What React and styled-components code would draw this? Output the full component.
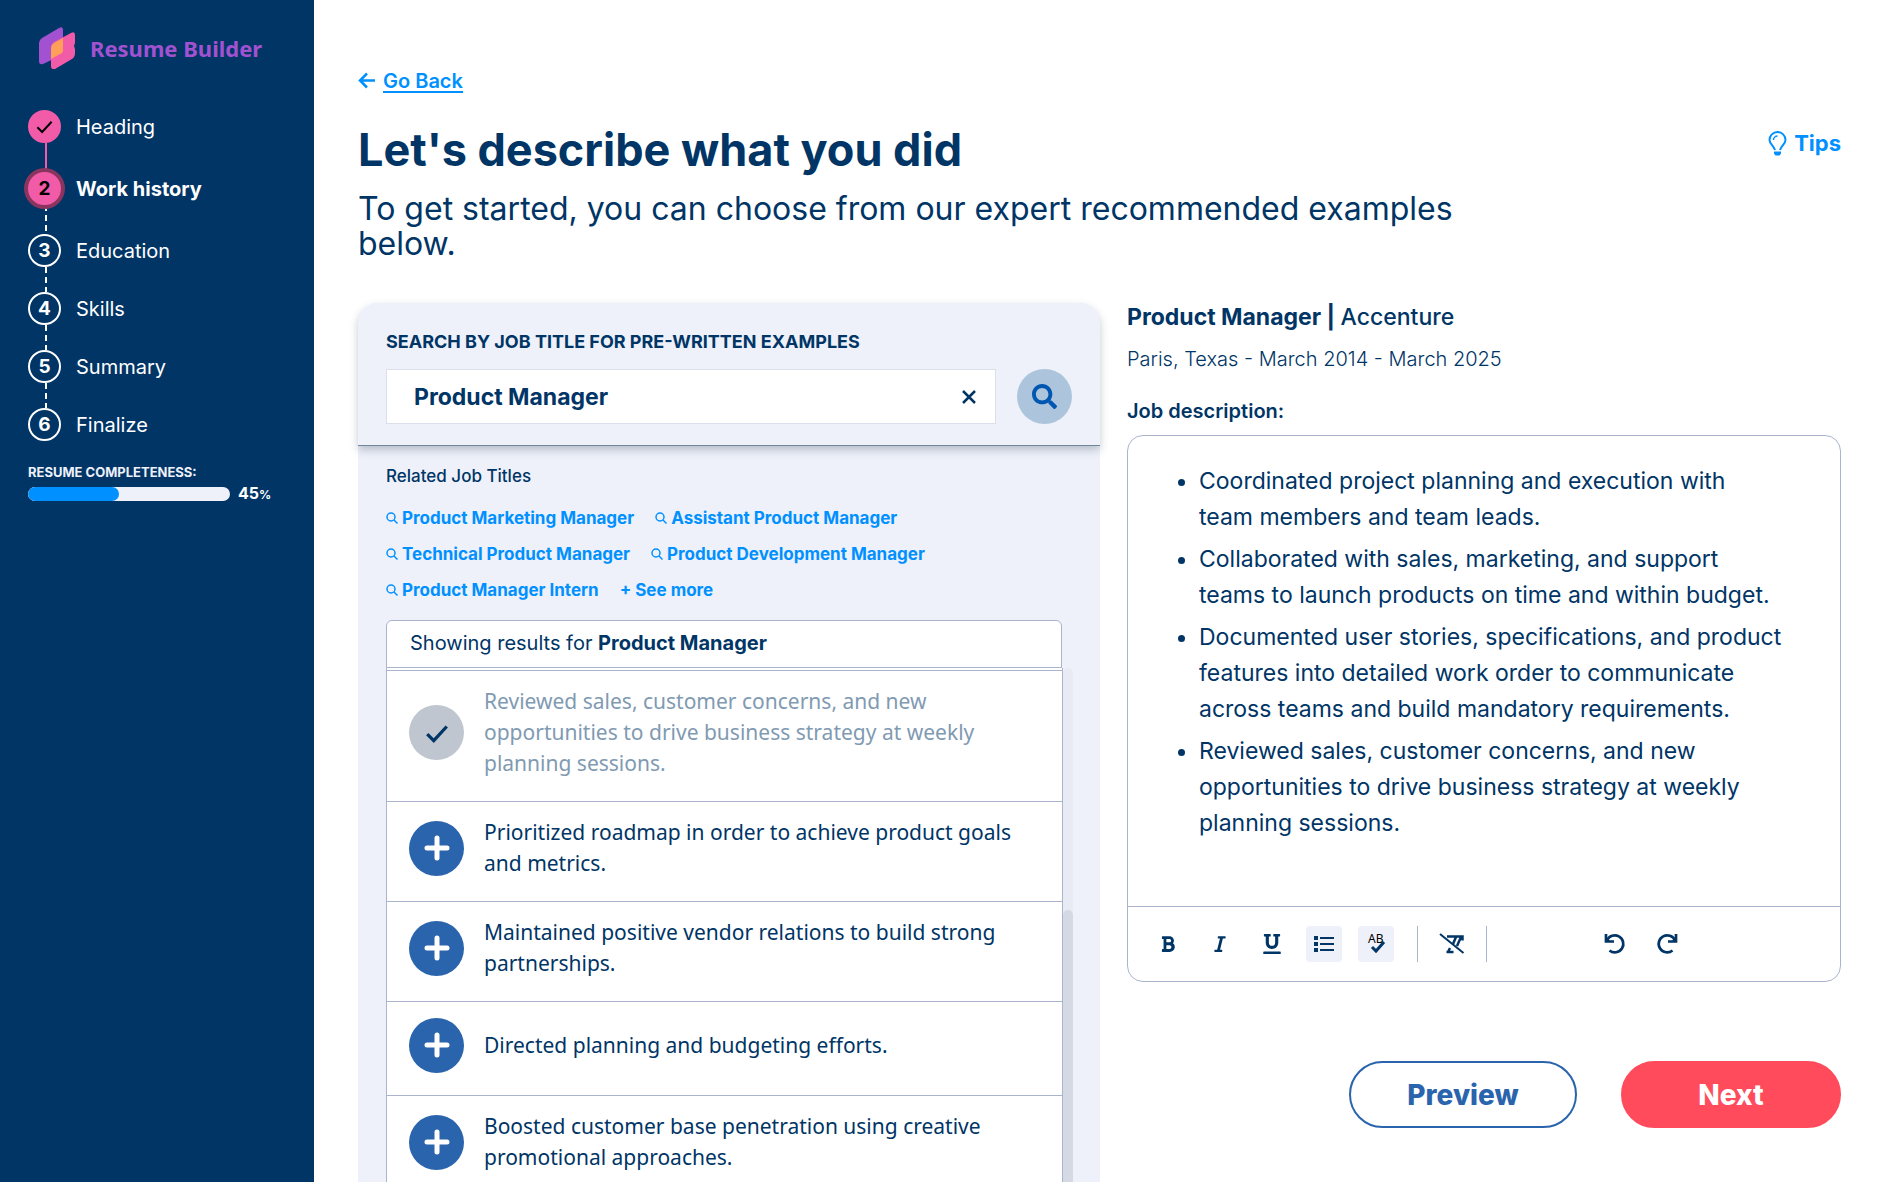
import React, { useState } from 'react'
import styled, { createGlobalStyle, css } from 'styled-components'
import { FaBold, FaItalic, FaUnderline, FaSearch } from 'react-icons/fa'

const navy = '#003566'
const blue = '#0090ff'
const line = '#aab4cf'
const pale = '#eef1fa'

const GlobalStyle = createGlobalStyle`
  * {
    box-sizing: border-box;
  }
  body {
    margin: 0;
    background: white;
    color: ${navy};
    font-family: 'Inter', 'Liberation Sans', sans-serif;
  }
  h1, h2, h3, p, ul, ol {
    margin: 0;
    padding: 0;
  }
  button, input {
    font-family: inherit;
    color: inherit;
  }
  button {
    border: 0;
    padding: 0;
    background: none;
    cursor: pointer;
  }
`

const Page = styled.div`
  display: flex;
  height: 100vh;
  overflow: hidden;
`

/* ---------- sidebar ---------- */

const Sidebar = styled.aside`
  flex: 0 0 314px;
  padding: 27px 28px;
  background: ${navy};
  color: white;
`

const Brand = styled.a`
  display: flex;
  align-items: center;
  gap: 14px;
  height: 42px;
  padding-left: 11px;
  color: #a252d0;
  font-family: 'Noto Sans', sans-serif;
  font-size: 22px;
  line-height: 40px;
  font-weight: 700;
  text-decoration: none;
  white-space: nowrap;
`

const Steps = styled.ol`
  margin-top: 41px;
  list-style: none;
`

const Step = styled.li`
  display: flex;
  align-items: center;
  gap: 15px;
  height: 33px;
  font-size: 20px;
  font-weight: ${(props) => (props.$current ? 700 : 400)};
`

const Marker = styled.span`
  display: flex;
  flex: 0 0 33px;
  align-items: center;
  justify-content: center;
  height: 33px;
  border: 2px solid white;
  border-radius: 50%;
  font-size: 19px;
  font-weight: 700;

  ${(props) =>
    props.$filled &&
    css`
      border-color: #f25ba7;
      background: #f25ba7;
      color: black;
    `}

  ${(props) =>
    props.$current &&
    css`
      box-shadow: 0 0 0 4px #8a355f;
    `}
`

const Connector = styled.li`
  width: 2px;
  height: ${(props) => (props.$tall ? 29 : 25)}px;
  margin-left: 17px;
  background: ${(props) =>
    props.$done ? '#f25ba7' : 'repeating-linear-gradient(to bottom, white 0 6px, transparent 6px 10px)'};
`

const Completeness = styled.div`
  margin-top: 23px;
  font-weight: 700;
`

const CompletenessLabel = styled.p`
  font-size: 13px;
  line-height: 16px;
  color: ${pale};
`

const CompletenessRow = styled.div`
  display: flex;
  align-items: center;
  gap: 8px;
  margin-top: 3px;
  font-size: 16px;
  line-height: 20px;

  small {
    font-size: 12px;
  }
`

const Bar = styled.div`
  flex: 0 0 202px;
  height: 14px;
  overflow: hidden;
  border-radius: 7px;
  background: ${pale};
`

const BarFill = styled.div`
  height: 100%;
  border-radius: 7px;
  background: ${blue};
`

/* ---------- main ---------- */

const Main = styled.main`
  display: flex;
  flex: 1;
  flex-direction: column;
  min-width: 0;
  padding: 68px 39px 0 44px;
`

const BackLink = styled.a`
  display: flex;
  align-items: center;
  gap: 8px;
  height: 24px;
  color: ${blue};
  font-size: 20px;
  font-weight: 600;
  text-decoration: none;

  span {
    padding-top: 3px;
    border-bottom: 2px solid ${blue};
    line-height: 20px;
  }
`

const TitleRow = styled.div`
  display: flex;
  align-items: center;
  justify-content: space-between;
  margin-top: 28px;
`

const Title = styled.h1`
  font-size: 45px;
  line-height: 60px;
  font-weight: 700;
`

const Tips = styled.a`
  display: flex;
  align-items: center;
  gap: 4px;
  padding-bottom: 14px;
  color: ${blue};
  font-size: 22px;
  font-weight: 700;
  text-decoration: none;
`

const Subtitle = styled.p`
  max-width: 1130px;
  margin-top: 11px;
  font-size: 32px;
  line-height: 35px;
  font-weight: 400;
`

const Columns = styled.div`
  display: grid;
  flex: 1;
  grid-template-columns: 742fr 714fr;
  column-gap: 27px;
  min-height: 0;
  margin-top: 42px;
`

/* ---------- examples ---------- */

const Examples = styled.section`
  display: flex;
  flex-direction: column;
  min-width: 0;
  min-height: 0;
  border-radius: 20px 20px 0 0;
  background: ${pale};
`

const SearchBox = styled.form`
  padding: 27px 28px 21px;
  border-bottom: 1px solid #70879b;
  border-radius: 20px 20px 0 0;
  box-shadow: 0 4px 8px rgba(60, 75, 90, 0.3);

  label {
    display: block;
    font-size: 18px;
    line-height: 24px;
    font-weight: 700;
  }
`

const SearchRow = styled.div`
  display: flex;
  gap: 21px;
  margin-top: 15px;
`

const Field = styled.div`
  display: flex;
  flex: 1;
  align-items: center;
  height: 55px;
  padding: 0 18px 0 27px;
  border: 1px solid #dbdfec;
  background: white;

  input {
    flex: 1;
    min-width: 0;
    padding: 0;
    border: 0;
    outline: 0;
    font-size: 23px;
    font-weight: 700;
  }

  button {
    display: flex;
  }
`

const RoundButton = styled.button`
  display: flex;
  flex: 0 0 55px;
  align-items: center;
  justify-content: center;
  height: 55px;
  border-radius: 50%;
  background: ${(props) => props.$fill || '#2a64ad'};
  color: ${(props) => props.$ink || 'white'};
`

const Related = styled.div`
  padding: 18px 28px 0;

  h2 {
    font-size: 17px;
    line-height: 24px;
    font-weight: 500;
  }
`

const RelatedList = styled.div`
  display: flex;
  flex-wrap: wrap;
  column-gap: 21px;
  max-width: 610px;
  margin-top: 12px;
`

const RelatedLink = styled.a`
  display: flex;
  align-items: center;
  gap: 4px;
  color: ${blue};
  font-size: 17px;
  line-height: 36px;
  font-weight: 700;
  text-decoration: none;
`

const Results = styled.div`
  display: flex;
  flex: 1;
  flex-direction: column;
  min-height: 0;
  padding: 12px 27px 0 28px;
`

const ResultsHead = styled.p`
  flex: none;
  height: 48px;
  margin-right: 11px;
  padding-left: 23px;
  border: 1px solid ${line};
  border-radius: 6px 6px 0 0;
  background: white;
  font-size: 20px;
  line-height: 44px;
`

const ResultsBody = styled.div`
  display: flex;
  flex: 1;
  min-height: 0;
`

const ResultList = styled.ul`
  flex: 1;
  padding-top: 2px;
  overflow: hidden;
  border: solid ${line};
  border-width: 0 1px;
  background: white;
  list-style: none;
`

const Result = styled.li`
  display: flex;
  align-items: center;
  gap: 20px;
  min-height: 94px;
  padding: 15px 22px 22px;
  border-top: 1px solid ${line};
  font-family: 'Noto Sans', 'Open Sans', sans-serif;
  font-size: 21px;
  line-height: 31px;
  color: ${(props) => (props.$added ? '#809ab2' : navy)};

  p {
    max-width: 534px;
  }
`

const Track = styled.div`
  display: flex;
  flex: 0 0 10px;
  flex-direction: column;
  justify-content: flex-end;
  border-radius: 5px 5px 0 0;
  background: #e8ebf4;
`

const Thumb = styled.div`
  height: 53%;
  border-radius: 5px 5px 0 0;
  background: #d5d9e3;
`

/* ---------- job ---------- */

const Job = styled.section`
  min-width: 0;
`

const JobTitle = styled.h2`
  font-size: 23px;
  line-height: 28px;
  font-weight: 700;

  span {
    font-weight: 500;
  }
`

const JobMeta = styled.p`
  margin-top: 16px;
  font-size: 20px;
  line-height: 24px;
  font-weight: 300;
`

const JobLabel = styled.h3`
  margin-top: 28px;
  font-size: 20px;
  line-height: 24px;
  font-weight: 600;
`

const Editor = styled.div`
  margin-top: 12px;
  border: 1px solid ${line};
  border-radius: 16px;
`

const Description = styled.div`
  min-height: 470px;
  padding: 27px 57px 0 71px;
  outline: 0;
  font-size: 23px;
  line-height: 36px;

  li {
    margin-bottom: 6px;
  }
`

const Toolbar = styled.div`
  display: flex;
  align-items: center;
  gap: 16px;
  height: 75px;
  padding: 0 22px;
  border-top: 1px solid ${line};
`

const Tool = styled.button`
  display: flex;
  flex: 0 0 36px;
  align-items: center;
  justify-content: center;
  height: 36px;
  border-radius: 4px;
  background: ${(props) => (props.$active ? pale : 'none')};

  svg {
    overflow: visible;
  }
`

const ToolDivider = styled.span`
  width: 1px;
  height: 36px;
  margin: 0 ${(props) => (props.$last ? 94 : 0)}px 0 ${(props) => (props.$last ? 0 : 7)}px;
  background: ${line};
`

const Actions = styled.div`
  display: flex;
  justify-content: flex-end;
  gap: 44px;
  margin-top: 79px;
`

const ActionButton = styled.button`
  width: ${(props) => (props.$primary ? 220 : 228)}px;
  height: 67px;
  border: 2px solid ${(props) => (props.$primary ? '#ff4b5c' : '#2a64ad')};
  border-radius: 34px;
  background: ${(props) => (props.$primary ? '#ff4b5c' : 'white')};
  color: ${(props) => (props.$primary ? 'white' : '#2a64ad')};
  font-size: 28px;
  font-weight: 800;
`

/* ---------- icons ---------- */

const Logo = () => (
  <svg width="37" height="42" viewBox="0 0 37 42" aria-hidden="true">
    <path d="M3 11 20 1Q24-1 24 3V24Q24 27 21 29L4 37Q0 38 0 34V16Q0 13 3 11Z" fill="#a252d0" />
    <path d="M15 15 32 6Q36 4 36 8V16L35 19 36 22V26Q36 30 33 32L16 42Q12 43 12 39V21Q12 17 15 15Z" fill="#f25ba7" />
    <path d="M15 16 24 11V23Q24 26 21 27L12 32V22Q12 18 15 16Z" fill="#ff9f5a" />
  </svg>
)

const Stroke = ({ size = 20, box = 24, width = 2, children, ...rest }) => (
  <svg
    width={size}
    height={size}
    viewBox={`0 0 ${box} ${box}`}
    fill="none"
    stroke="currentColor"
    strokeWidth={width}
    aria-hidden="true"
    {...rest}
  >
    {children}
  </svg>
)

const Check = ({ size, width }) => (
  <Stroke size={size} width={width}>
    <path d="m3 13 6 6L21 6" />
  </Stroke>
)

const Plus = () => (
  <Stroke size={26} box={26} width={5} strokeLinecap="round">
    <path d="M13 3v20M3 13h20" />
  </Stroke>
)

const Bulb = () => (
  <Stroke size={25} box={25} width={2}>
    <path d="M10 19C9 15 4.500 13 4.500 9a8 8 0 0 1 16 0c0 4-4.500 6-5.500 10" />
    <path d="M8.500 9a4 4 0 0 1 4-4" strokeWidth="1.500" />
    <path d="M9 20.500h7v2l-1.500 2h-4L9 22.500z" fill="currentColor" stroke="none" />
  </Stroke>
)

const Undo = ({ flip }) => (
  <svg width="22" height="22" viewBox="0 0 22 22" aria-hidden="true">
    <g transform={flip ? 'matrix(-1 0 0 1 22 0)' : undefined} fill="none" stroke={navy} strokeWidth="2.700">
      <path d="M3 7.500A8.500 8.500 0 1 1 5.500 17.500" />
      <path d="M2 1v7.500h8" />
      <path d="M2 8.500V4l4.500 4.500z" fill={navy} stroke="none" />
    </g>
  </svg>
)

/* ---------- data ---------- */

const steps = ['Heading', 'Work history', 'Education', 'Skills', 'Summary', 'Finalize']

const relatedTitles = [
  'Product Marketing Manager',
  'Assistant Product Manager',
  'Technical Product Manager',
  'Product Development Manager',
  'Product Manager Intern',
]

const results = [
  {
    text: 'Reviewed sales, customer concerns, and new opportunities to drive business strategy at weekly planning sessions.',
    added: true,
  },
  { text: 'Prioritized roadmap in order to achieve product goals and metrics.' },
  { text: 'Maintained positive vendor relations to build strong partnerships.' },
  { text: 'Directed planning and budgeting efforts.' },
  { text: 'Boosted customer base penetration using creative promotional approaches.' },
]

const duties = [
  'Coordinated project planning and execution with team members and team leads.',
  'Collaborated with sales, marketing, and support teams to launch products on time and within budget.',
  'Documented user stories, specifications, and product features into detailed work order to communicate across teams and build mandatory requirements.',
  'Reviewed sales, customer concerns, and new opportunities to drive business strategy at weekly planning sessions.',
]

const App = () => {
  const [query, setQuery] = useState('Product Manager')
  const complete = 45

  return (
    <>
      <GlobalStyle />
      <Page>
        <Sidebar>
          <Brand href="#">
            <Logo />
            Resume Builder
          </Brand>
          <Steps>
            {steps.map((step, i) => (
              <React.Fragment key={step}>
                {i > 0 && <Connector aria-hidden="true" $done={i === 1} $tall={i < 3} />}
                <Step $current={i === 1}>
                  <Marker $filled={i < 2} $current={i === 1}>
                    {i === 0 ? <Check size={19} width={2.5} /> : i + 1}
                  </Marker>
                  {step}
                </Step>
              </React.Fragment>
            ))}
          </Steps>
          <Completeness>
            <CompletenessLabel>RESUME COMPLETENESS:</CompletenessLabel>
            <CompletenessRow>
              <Bar>
                <BarFill style={{ width: `${complete}%` }} />
              </Bar>
              <span>
                {complete}
                <small>%</small>
              </span>
            </CompletenessRow>
          </Completeness>
        </Sidebar>

        <Main>
          <BackLink href="#">
            <Stroke size={17} box={17} width={2.5}>
              <path d="M17 8.500H2M9 1.500l-7 7 7 7" />
            </Stroke>
            <span>Go Back</span>
          </BackLink>
          <TitleRow>
            <Title>Let's describe what you did</Title>
            <Tips href="#">
              <Bulb />
              Tips
            </Tips>
          </TitleRow>
          <Subtitle>To get started, you can choose from our expert recommended examples below.</Subtitle>

          <Columns>
            <Examples>
              <SearchBox onSubmit={(e) => e.preventDefault()}>
                <label htmlFor="job-search">SEARCH BY JOB TITLE FOR PRE-WRITTEN EXAMPLES</label>
                <SearchRow>
                  <Field>
                    <input id="job-search" value={query} onChange={(e) => setQuery(e.target.value)} />
                    <button type="button" aria-label="Clear" onClick={() => setQuery('')}>
                      <Stroke size={16} box={16} width={2.5}>
                        <path d="m2 2 12 12M14 2 2 14" />
                      </Stroke>
                    </button>
                  </Field>
                  <RoundButton aria-label="Search" $fill="#adc5dc" $ink="#0056b0">
                    <FaSearch size={25} />
                  </RoundButton>
                </SearchRow>
              </SearchBox>

              <Related>
                <h2>Related Job Titles</h2>
                <RelatedList>
                  {relatedTitles.map((title) => (
                    <RelatedLink href="#" key={title}>
                      <Stroke size={12} box={12} width={1.5}>
                        <circle cx="5" cy="5" r="4" />
                        <path d="m8 8 3.500 3.500" />
                      </Stroke>
                      {title}
                    </RelatedLink>
                  ))}
                  <RelatedLink href="#">+ See more</RelatedLink>
                </RelatedList>
              </Related>

              <Results>
                <ResultsHead>
                  Showing results for <b>Product Manager</b>
                </ResultsHead>
                <ResultsBody>
                  <ResultList>
                    {results.map(({ text, added }) => (
                      <Result key={text} $added={added}>
                        <RoundButton
                          aria-label={added ? 'Added' : 'Add'}
                          $fill={added && '#c0c6cf'}
                          $ink={added && navy}
                        >
                          {added ? <Check size={26} width={3} /> : <Plus />}
                        </RoundButton>
                        <p>{text}</p>
                      </Result>
                    ))}
                  </ResultList>
                  <Track>
                    <Thumb />
                  </Track>
                </ResultsBody>
              </Results>
            </Examples>

            <Job>
              <JobTitle>
                Product Manager | <span>Accenture</span>
              </JobTitle>
              <JobMeta>Paris, Texas - March 2014 - March 2025</JobMeta>
              <JobLabel id="job-description">Job description:</JobLabel>
              <Editor>
                <Description
                  role="textbox"
                  aria-multiline="true"
                  aria-labelledby="job-description"
                  contentEditable
                  suppressContentEditableWarning
                >
                  <ul>
                    {duties.map((duty) => (
                      <li key={duty}>{duty}</li>
                    ))}
                  </ul>
                </Description>
                <Toolbar>
                  <Tool aria-label="Bold">
                    <FaBold size={18} />
                  </Tool>
                  <Tool aria-label="Italic">
                    <FaItalic size={18} />
                  </Tool>
                  <Tool aria-label="Underline">
                    <FaUnderline size={20} />
                  </Tool>
                  <Tool aria-label="Bulleted list" $active>
                    <svg width="20" height="18" viewBox="0 0 20 18" fill={navy}>
                      <path d="M0 1h4v4H0zM0 7h4v4H0zM0 13h4v4H0zM6 2h14v2H6zM6 8h14v2H6zM6 14h14v2H6z" />
                    </svg>
                  </Tool>
                  <Tool aria-label="Spell check" $active>
                    <svg width="20" height="22" viewBox="0 0 20 22">
                      <text x="2" y="10" fontSize="12" fontFamily="Noto Sans, sans-serif" fill="black">
                        AB
                      </text>
                      <path d="m6 14 4 4 8-9" fill="none" stroke={navy} strokeWidth="3" />
                    </svg>
                  </Tool>
                  <ToolDivider />
                  <Tool aria-label="Clear formatting">
                    <svg width="26" height="22" viewBox="0 0 26 22" fill="none" stroke={navy} strokeWidth="2.500">
                      <path d="m1 1 23.500 19" strokeWidth="2" />
                      <path d="M8 3.500h15.500v4M17 4l-3 7M11 15l-2 4M7.500 19h7M22 4l-4 9" />
                    </svg>
                  </Tool>
                  <ToolDivider $last />
                  <Tool aria-label="Undo">
                    <Undo />
                  </Tool>
                  <Tool aria-label="Redo">
                    <Undo flip />
                  </Tool>
                </Toolbar>
              </Editor>
              <Actions>
                <ActionButton>Preview</ActionButton>
                <ActionButton $primary>Next</ActionButton>
              </Actions>
            </Job>
          </Columns>
        </Main>
      </Page>
    </>
  )
}

export default App
